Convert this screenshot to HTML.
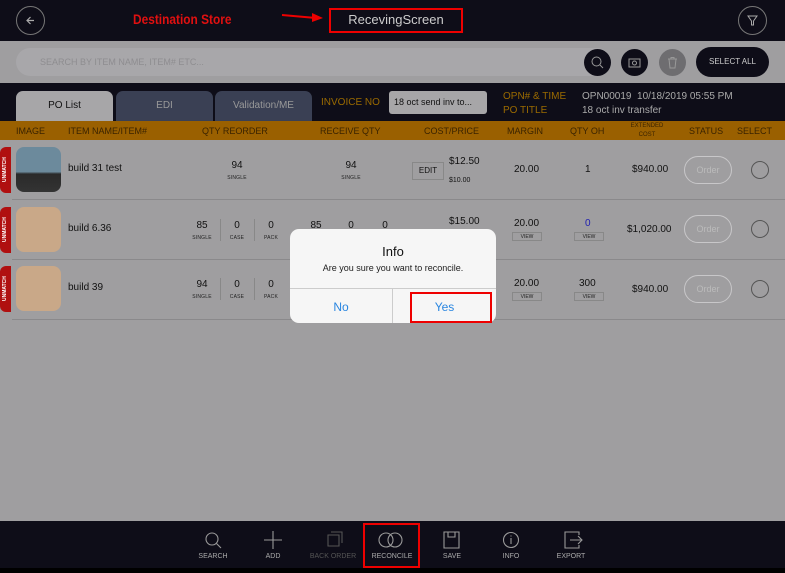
<!DOCTYPE html>
<html><head><meta charset="utf-8"><style>
*{margin:0;padding:0;box-sizing:border-box}
body{width:785px;height:573px;overflow:hidden;background:#9f9ea0;font-family:"Liberation Sans",sans-serif;position:relative}
.a{position:absolute}
.c{text-align:center}
.top{left:0;top:0;width:785px;height:41px;background:#0e0d18}
.circ{border:1px solid #777;border-radius:50%}
.num{font-size:10px;color:#111;text-align:center}
.sub{font-size:5px;color:#222;text-align:center;letter-spacing:.2px}
.hd{font-size:9px;color:#3a2300;top:126px}
.row{left:12px;width:773px;height:1px;background:#8a898b}
.stat{width:48px;height:28px;border:1px solid #c8c7c9;border-radius:14px;color:#bbb;font-size:9px;line-height:26px;text-align:center}
.sel{width:18px;height:18px;border:1px solid #555;border-radius:50%}
.um{left:0;width:11px;height:46px;background:#b01010;border-radius:0 6px 6px 0;color:#fff;font-size:5px;writing-mode:vertical-rl;transform:rotate(180deg);text-align:center;line-height:11px;font-weight:bold}
.img{left:16px;width:45px;height:45px;border-radius:8px;background:#c9a888}
.vw{font-size:5px;border:1px solid #888;width:22px;height:9px;line-height:8px;text-align:center;color:#222}
.bl{font-size:7px;color:#aaa;text-align:center;width:60px;top:553px}
.div{width:1px;height:22px;background:#888}
</style></head><body>
<div class="a top"></div>
<div class="a circ" style="left:16px;top:6px;width:29px;height:29px"></div>
<svg class="a" style="left:23px;top:13px" width="15" height="15"><path d="M11 7.5H4M7.5 4L4 7.5 7.5 11" stroke="#aaa" fill="none" stroke-width="1.2"/></svg>
<div class="a" style="left:133px;top:11px;color:#e01010;font-size:14px;font-weight:bold;transform:scaleX(.85);transform-origin:left">Destination Store</div>
<svg class="a" style="left:280px;top:10px" width="45" height="14"><path d="M2 5L36 8" stroke="#e00" stroke-width="2"/><path d="M32 3L43 8 32 12z" fill="#e00"/></svg>
<div class="a" style="left:329px;top:8px;width:134px;height:25px;border:2px solid #e00"></div>
<div class="a c" style="left:329px;top:12px;width:134px;color:#ccc;font-size:13px">RecevingScreen</div>
<div class="a circ" style="left:738px;top:6px;width:29px;height:29px"></div>
<svg class="a" style="left:745px;top:13px" width="15" height="15"><path d="M3 3H12L8.5 8V12H6.5V8z" stroke="#aaa" fill="none"/></svg>

<div class="a" style="left:16px;top:48px;width:595px;height:28px;border-radius:14px;background:#a8a7aa"></div>
<div class="a" style="left:40px;top:57px;font-size:9px;color:#8e8d90">SEARCH BY ITEM NAME, ITEM# ETC...</div>
<div class="a" style="left:584px;top:49px;width:27px;height:27px;border-radius:50%;background:#0e0d18"></div>
<svg class="a" style="left:590px;top:55px" width="15" height="15"><circle cx="6.5" cy="6.5" r="4.5" stroke="#999" fill="none"/><path d="M10 10L13 13" stroke="#999"/></svg>
<div class="a" style="left:621px;top:49px;width:27px;height:27px;border-radius:50%;background:#0e0d18"></div>
<svg class="a" style="left:627px;top:55px" width="15" height="15"><rect x="2" y="4" width="11" height="8" stroke="#999" fill="none"/><circle cx="7.5" cy="8" r="2" stroke="#999" fill="none"/></svg>
<div class="a" style="left:659px;top:49px;width:27px;height:27px;border-radius:50%;background:#6e6d70"></div>
<svg class="a" style="left:665px;top:55px" width="15" height="15"><path d="M3 4H12M6 4V2.5H9V4M4 4L5 13H10L11 4" stroke="#999" fill="none"/></svg>
<div class="a c" style="left:696px;top:47px;width:73px;height:30px;border-radius:15px;background:#0e0d18;color:#ccc;font-size:8px;line-height:30px">SELECT ALL</div>

<div class="a" style="left:0;top:83px;width:785px;height:38px;background:#0e0d18"></div>
<div class="a c" style="left:16px;top:91px;width:97px;height:30px;background:#a7a6a8;border-radius:7px 7px 0 0;font-size:10px;line-height:30px;color:#111">PO List</div>
<div class="a c" style="left:116px;top:91px;width:97px;height:30px;background:#3a4054;border-radius:7px 7px 0 0;font-size:10px;line-height:30px;color:#999">EDI</div>
<div class="a c" style="left:215px;top:91px;width:97px;height:30px;background:#3a4054;border-radius:7px 7px 0 0;font-size:10px;line-height:30px;color:#999">Validation/ME</div>
<div class="a" style="left:321px;top:97px;font-size:10px;color:#9a6a00">INVOICE NO</div>
<div class="a" style="left:389px;top:91px;width:98px;height:23px;background:#a7a6a8;border-radius:3px;font-size:9px;color:#111;line-height:23px;padding-left:5px">18 oct send inv to...</div>
<div class="a" style="left:503px;top:90px;font-size:10px;color:#9a6a00;line-height:14px">OPN# &amp; TIME<br>PO TITLE</div>
<div class="a" style="left:582px;top:90px;font-size:10px;color:#aaa;line-height:14px">OPN00019 &nbsp;10/18/2019 05:55 PM<br>18 oct inv transfer</div>

<div class="a" style="left:0;top:121px;width:785px;height:19px;background:#9a6000"></div>
<div class="a hd" style="left:16px">IMAGE</div>
<div class="a hd" style="left:68px">ITEM NAME/ITEM#</div>
<div class="a hd" style="left:202px">QTY REORDER</div>
<div class="a hd" style="left:320px">RECEIVE QTY</div>
<div class="a hd" style="left:424px">COST/PRICE</div>
<div class="a hd" style="left:507px">MARGIN</div>
<div class="a hd" style="left:570px">QTY OH</div>
<div class="a hd c" style="left:622px;top:122px;font-size:6px;width:50px;line-height:9px">EXTENDED<br>COST</div>
<div class="a hd" style="left:689px">STATUS</div>
<div class="a hd" style="left:737px">SELECT</div>

<!-- row 1 -->
<div class="a um" style="top:147px">UNMATCH</div>
<div class="a img" style="top:147px;background:linear-gradient(#6c8a9c 0,#6c8a9c 55%,#2a2a2a 60%,#333 100%)"></div>
<div class="a" style="left:68px;top:163px;font-size:10px;color:#111">build 31 test</div>
<div class="a num" style="left:222px;top:160px;width:30px">94</div><div class="a sub" style="left:222px;top:175px;width:30px">SINGLE</div>
<div class="a num" style="left:336px;top:160px;width:30px">94</div><div class="a sub" style="left:336px;top:175px;width:30px">SINGLE</div>
<div class="a c" style="left:412px;top:162px;width:32px;height:18px;border:1px solid #888;font-size:8px;line-height:16px;color:#111">EDIT</div>
<div class="a" style="left:449px;top:156px;font-size:10px;color:#111">$12.50</div>
<div class="a" style="left:449px;top:177px;font-size:7px;color:#111">$10.00</div>
<div class="a" style="left:514px;top:164px;font-size:10px;color:#111">20.00</div>
<div class="a" style="left:585px;top:164px;font-size:10px;color:#111">1</div>
<div class="a" style="left:632px;top:164px;font-size:10px;color:#111">$940.00</div>
<div class="a stat" style="left:684px;top:156px">Order</div>
<div class="a sel" style="left:751px;top:161px"></div>
<div class="a row" style="top:199px"></div>

<!-- row 2 -->
<div class="a um" style="top:207px">UNMATCH</div>
<div class="a img" style="top:207px"></div>
<div class="a" style="left:68px;top:223px;font-size:10px;color:#111">build 6.36</div>
<div class="a num" style="left:192px;top:220px;width:20px">85</div><div class="a sub" style="left:187px;top:235px;width:30px">SINGLE</div>
<div class="a div" style="left:220px;top:219px"></div>
<div class="a num" style="left:227px;top:220px;width:20px">0</div><div class="a sub" style="left:227px;top:235px;width:20px">CASE</div>
<div class="a div" style="left:254px;top:219px"></div>
<div class="a num" style="left:261px;top:220px;width:20px">0</div><div class="a sub" style="left:261px;top:235px;width:20px">PACK</div>
<div class="a num" style="left:306px;top:220px;width:20px">85</div>
<div class="a num" style="left:341px;top:220px;width:20px">0</div>
<div class="a num" style="left:375px;top:220px;width:20px">0</div>
<div class="a" style="left:449px;top:216px;font-size:10px;color:#111">$15.00</div>
<div class="a" style="left:514px;top:218px;font-size:10px;color:#111">20.00</div>
<div class="a vw" style="left:512px;top:232px;width:30px">VIEW</div>
<div class="a" style="left:585px;top:218px;font-size:10px;color:#2020b0">0</div>
<div class="a vw" style="left:574px;top:232px;width:30px">VIEW</div>
<div class="a" style="left:627px;top:224px;font-size:10px;color:#111">$1,020.00</div>
<div class="a stat" style="left:684px;top:215px">Order</div>
<div class="a sel" style="left:751px;top:220px"></div>
<div class="a row" style="top:259px"></div>

<!-- row 3 -->
<div class="a um" style="top:266px">UNMATCH</div>
<div class="a img" style="top:266px"></div>
<div class="a" style="left:68px;top:282px;font-size:10px;color:#111">build 39</div>
<div class="a num" style="left:192px;top:279px;width:20px">94</div><div class="a sub" style="left:187px;top:294px;width:30px">SINGLE</div>
<div class="a div" style="left:220px;top:278px"></div>
<div class="a num" style="left:227px;top:279px;width:20px">0</div><div class="a sub" style="left:227px;top:294px;width:20px">CASE</div>
<div class="a div" style="left:254px;top:278px"></div>
<div class="a num" style="left:261px;top:279px;width:20px">0</div><div class="a sub" style="left:261px;top:294px;width:20px">PACK</div>
<div class="a" style="left:514px;top:278px;font-size:10px;color:#111">20.00</div>
<div class="a vw" style="left:512px;top:292px;width:30px">VIEW</div>
<div class="a" style="left:579px;top:278px;font-size:10px;color:#111">300</div>
<div class="a vw" style="left:574px;top:292px;width:30px">VIEW</div>
<div class="a" style="left:632px;top:284px;font-size:10px;color:#111">$940.00</div>
<div class="a stat" style="left:684px;top:275px">Order</div>
<div class="a sel" style="left:751px;top:280px"></div>
<div class="a row" style="top:319px"></div>

<!-- dialog -->
<div class="a" style="left:290px;top:229px;width:206px;height:94px;background:#f6f6f6;border-radius:9px"></div>
<div class="a c" style="left:290px;top:244px;width:206px;font-size:13px;color:#111">Info</div>
<div class="a c" style="left:290px;top:263px;width:206px;font-size:9px;color:#222">Are you sure you want to reconcile.</div>
<div class="a" style="left:290px;top:288px;width:206px;height:1px;background:#ccc"></div>
<div class="a" style="left:392px;top:288px;width:1px;height:35px;background:#ccc"></div>
<div class="a c" style="left:290px;top:300px;width:102px;font-size:12px;color:#2a86e0">No</div>
<div class="a c" style="left:393px;top:300px;width:103px;font-size:12px;color:#2a86e0">Yes</div>
<div class="a" style="left:410px;top:292px;width:82px;height:31px;border:2px solid #e00"></div>

<!-- bottom bar -->
<div class="a" style="left:0;top:521px;width:785px;height:52px;background:#0e0d18"></div>
<div class="a" style="left:0;top:568px;width:785px;height:5px;background:#000"></div>
<svg class="a" style="left:200px;top:530px" width="390" height="22" fill="none" stroke="#999" stroke-width="1.1">
<circle cx="12" cy="9" r="6"/><path d="M16.5 13.5L21 18"/>
<path d="M73 1V19M64 10H82" />
<path d="M128 5H139V16H128zM131 2H142V13" stroke="#555"/>
<circle cx="186" cy="10" r="7"/><circle cx="195" cy="10" r="7"/>
<path d="M244 2H259V18H244zM248 2V7H255V2"/>
<circle cx="311" cy="10" r="7.5"/><path d="M311 8V14M311 5.5V6.5"/>
<path d="M379 5V2H365V18H379V15M370 10H382M378 6L382 10 378 14"/>
</svg>
<div class="a bl" style="left:183px">SEARCH</div>
<div class="a bl" style="left:243px">ADD</div>
<div class="a bl" style="left:303px;color:#555">BACK ORDER</div>
<div class="a bl" style="left:362px">RECONCILE</div>
<div class="a bl" style="left:422px">SAVE</div>
<div class="a bl" style="left:481px">INFO</div>
<div class="a bl" style="left:541px">EXPORT</div>
<div class="a" style="left:363px;top:523px;width:57px;height:45px;border:2px solid #e00"></div>
</body></html>
